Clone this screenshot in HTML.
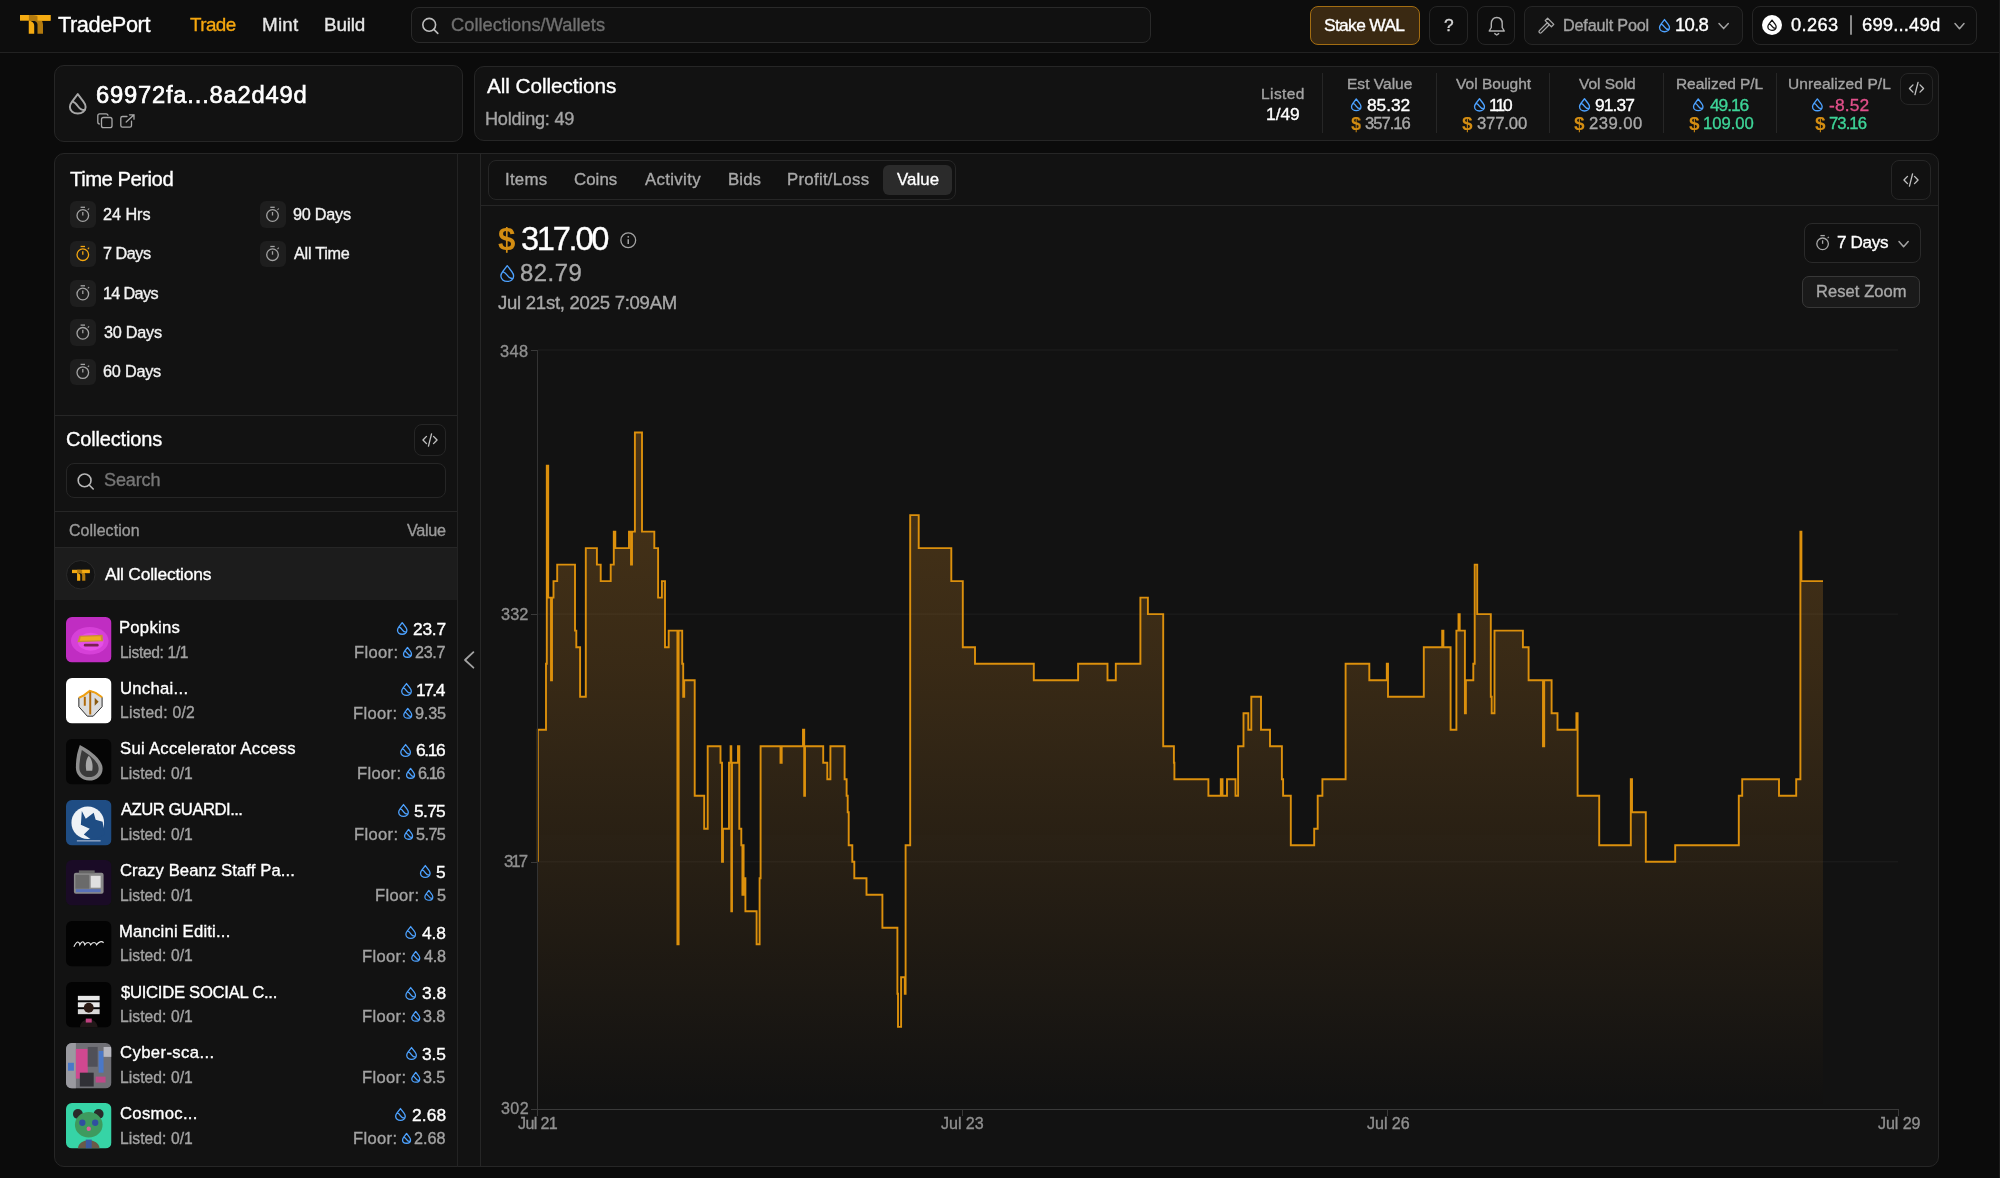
<!DOCTYPE html>
<html><head><meta charset="utf-8">
<style>
*{box-sizing:border-box;margin:0;padding:0}
html,body{width:2000px;height:1178px;overflow:hidden;background:#0b0b0b;font-family:"Liberation Sans",sans-serif;color:#fff}
.a{position:absolute}
.t{position:absolute;white-space:nowrap;line-height:1;will-change:transform;-webkit-text-stroke:0.35px currentColor}
svg{position:absolute;overflow:visible}
</style></head><body>
<div class="a" style="left:0px;top:0px;width:2000px;height:53px;background:#0d0d0d;border-bottom:1px solid #222"></div>
<div class="a" style="left:1999px;top:0px;width:1px;height:1178px;background:#1c1c1c"></div>
<div class="a" style="left:411px;top:7px;width:740px;height:36px;background:#111;border:1px solid #2a2a2a;border-radius:8px"></div>
<div class="a" style="left:1310px;top:6px;width:110px;height:39px;background:#3a2912;border:1px solid #a36d12;border-radius:8px"></div>
<div class="a" style="left:1429px;top:6px;width:39px;height:39px;background:#0e0e0e;border:1px solid #262626;border-radius:8px"></div>
<div class="a" style="left:1477px;top:6px;width:38px;height:39px;background:#0e0e0e;border:1px solid #262626;border-radius:8px"></div>
<div class="a" style="left:1524px;top:6px;width:219px;height:39px;background:#121212;border:1px solid #262626;border-radius:8px"></div>
<div class="a" style="left:1752px;top:6px;width:225px;height:39px;background:#0e0e0e;border:1px solid #262626;border-radius:8px"></div>
<div class="a" style="left:54px;top:65px;width:409px;height:77px;background:#121212;border:1px solid #262626;border-radius:10px"></div>
<div class="a" style="left:474px;top:66px;width:1465px;height:75px;background:#121212;border:1px solid #262626;border-radius:10px"></div>
<div class="a" style="left:1322px;top:73px;width:1px;height:60px;background:#262626"></div>
<div class="a" style="left:1436px;top:73px;width:1px;height:60px;background:#262626"></div>
<div class="a" style="left:1549px;top:73px;width:1px;height:60px;background:#262626"></div>
<div class="a" style="left:1663px;top:73px;width:1px;height:60px;background:#262626"></div>
<div class="a" style="left:1776px;top:73px;width:1px;height:60px;background:#262626"></div>
<div class="a" style="left:1900px;top:73px;width:33px;height:32px;border:1px solid #262626;border-radius:8px;background:#111"></div>
<div class="a" style="left:54px;top:153px;width:1885px;height:1014px;background:#121212;border:1px solid #262626;border-radius:10px"></div>
<div class="a" style="left:457px;top:153px;width:1px;height:1014px;background:#232323"></div>
<div class="a" style="left:480px;top:153px;width:1px;height:1014px;background:#262626"></div>
<div class="a" style="left:55px;top:415px;width:402px;height:1px;background:#262626"></div>
<div class="a" style="left:55px;top:511px;width:402px;height:1px;background:#262626"></div>
<div class="a" style="left:55px;top:547px;width:402px;height:1px;background:#262626"></div>
<div class="a" style="left:55px;top:548px;width:402px;height:52px;background:#1c1c1c"></div>
<div class="a" style="left:481px;top:205px;width:1457px;height:1px;background:#262626"></div>
<div class="a" style="left:488px;top:160px;width:468px;height:40px;border:1px solid #262626;border-radius:8px;background:#111"></div>
<div class="a" style="left:883px;top:165px;width:69px;height:30px;background:#2b2b2b;border-radius:6px"></div>
<div class="a" style="left:1891px;top:160px;width:40px;height:40px;border:1px solid #262626;border-radius:8px;background:#111"></div>
<div class="a" style="left:1804px;top:223px;width:117px;height:40px;border:1px solid #2a2a2a;border-radius:8px;background:#101010"></div>
<div class="a" style="left:1802px;top:276px;width:118px;height:32px;border:1px solid #383838;border-radius:7px;background:#1a1a1a"></div>
<div class="a" style="left:414px;top:424px;width:32px;height:32px;border:1px solid #262626;border-radius:8px;background:#111"></div>
<div class="a" style="left:66px;top:463px;width:380px;height:35px;border:1px solid #262626;border-radius:8px;background:#101010"></div>
<div class="a" style="left:70px;top:201px;width:26px;height:26.5px;background:#1e1e1e;border-radius:6px"></div>
<div class="a" style="left:70px;top:240.5px;width:26px;height:26.5px;background:#1e1e1e;border-radius:6px"></div>
<div class="a" style="left:70px;top:280px;width:26px;height:26.5px;background:#1e1e1e;border-radius:6px"></div>
<div class="a" style="left:70px;top:319px;width:26px;height:26.5px;background:#1e1e1e;border-radius:6px"></div>
<div class="a" style="left:70px;top:358.5px;width:26px;height:26.5px;background:#1e1e1e;border-radius:6px"></div>
<div class="a" style="left:259.5px;top:201px;width:26px;height:26.5px;background:#1e1e1e;border-radius:6px"></div>
<div class="a" style="left:259.5px;top:240.5px;width:26px;height:26.5px;background:#1e1e1e;border-radius:6px"></div>
<svg style="left:20px;top:15.2px;" width="31" height="19" viewBox="0 0 31 19"><rect x="0" y="0" width="30.5" height="5.7" fill="#f5ab12"/><path d="M8.9 0H12.5C18 0 23 4.2 23 9.8V18.8H17.5V9.8C17.5 7.2 15.5 5.7 12.5 5.7H8.9Z" fill="#b37a0e"/><rect x="17.5" y="0" width="13" height="5.7" fill="#f5ab12"/><path d="M8.75 5.7H9.2C12 5.7 14.2 8 14.2 10.8V18.8H8.75Z" fill="#f5ab12"/></svg>
<div class="t" style="left:58.32px;top:14.00px;font-size:21.74px;color:#fff;letter-spacing:-0.42px;">TradePort</div>
<div class="t" style="left:189.82px;top:16.00px;font-size:18.84px;color:#f5a70f;letter-spacing:-0.57px;">Trade</div>
<div class="t" style="left:262.19px;top:16.00px;font-size:18.84px;color:#e6e6e6;letter-spacing:0.20px;">Mint</div>
<div class="t" style="left:324.49px;top:16.00px;font-size:18.84px;color:#e6e6e6;letter-spacing:-0.17px;">Build</div>
<svg style="left:0;top:0" width="1" height="1"><circle cx="429.2" cy="24.799999999999997" r="6.4" fill="none" stroke="#bdbdbd" stroke-width="1.6"/><line x1="433.808" y1="29.407999999999998" x2="437.8" y2="33.4" stroke="#bdbdbd" stroke-width="1.6" stroke-linecap="round"/></svg>
<div class="t" style="left:451.09px;top:16.00px;font-size:18.26px;color:#707070;letter-spacing:0.03px;">Collections/Wallets</div>
<div class="t" style="left:1324.42px;top:17.00px;font-size:17.39px;color:#fff;letter-spacing:-0.66px;">Stake WAL</div>
<div class="t" style="left:1443.70px;top:17.00px;font-size:17.39px;color:#d6d6d6;">?</div>
<svg style="left:1487.5px;top:16px;" width="17.5" height="20" viewBox="0 0 17.5 20"><path d="M8.75 1.5 C5.3 1.5 3.3 4 3.3 7.5 V11.5 L1.2 15 H16.3 L14.2 11.5 V7.5 C14.2 4 12.2 1.5 8.75 1.5Z" fill="none" stroke="#b0b0b0" stroke-width="1.4" stroke-linejoin="round"/><path d="M6.8 17.6 L8.75 19 L10.7 17.6" fill="none" stroke="#b0b0b0" stroke-width="1.4" stroke-linecap="round"/></svg>
<svg style="left:1537.5px;top:16.5px;" width="17" height="17" viewBox="0 0 17 17"><path d="M9.6 1.2 L15.8 7.4 L13.4 9.8 L7.2 3.6 Z" fill="none" stroke="#a8a8a8" stroke-width="1.3" stroke-linejoin="round"/><path d="M9.3 5.7 L11.3 7.7 L3.4 15.6 C2.85 16.15 1.95 16.15 1.4 15.6 C0.85 15.05 0.85 14.15 1.4 13.6 Z" fill="none" stroke="#a8a8a8" stroke-width="1.3" stroke-linejoin="round"/></svg>
<div class="t" style="left:1563.10px;top:17.00px;font-size:16.23px;color:#a3a3a3;letter-spacing:-0.20px;">Default Pool</div>
<svg style="left:1659.0px;top:18.6px;overflow:visible" width="11.0" height="13.2" viewBox="0 0 20 24"><path d="M10 1 L16.3 9.2 C17.9 11.3 19 13.4 19 15.6 C19 20.1 15 23.2 10 23.2 C5 23.2 1 20.1 1 15.6 C1 13.4 2.1 11.3 3.7 9.2 Z" fill="none" stroke="#4da2ff" stroke-width="2.45" stroke-linejoin="round"/><path d="M3.6 9.3 C6.8 10.1 8.6 12.4 10.2 14.8 C12 17.6 14.6 19.4 18.6 19.1" fill="none" stroke="#4da2ff" stroke-width="2.45"/></svg>
<div class="t" style="left:1674.61px;top:16.00px;font-size:18.55px;color:#fff;letter-spacing:-0.72px;">10.8</div>
<svg style="left:0;top:0" width="1" height="1"><path d="M1719 23.6 L1723.65 28.6 L1728.3 23.6" fill="none" stroke="#a3a3a3" stroke-width="1.5" stroke-linecap="round" stroke-linejoin="round"/></svg>
<svg style="left:1762px;top:15.4px;" width="20" height="20" viewBox="0 0 20 20"><circle cx="10" cy="10" r="10" fill="#fff"/><g transform="translate(5.4,4.6) scale(0.46)"><path d="M10 1 L16.3 9.2 C17.9 11.3 19 13.4 19 15.6 C19 20.1 15 23.2 10 23.2 C5 23.2 1 20.1 1 15.6 C1 13.4 2.1 11.3 3.7 9.2 Z" fill="none" stroke="#111" stroke-width="2.8" stroke-linejoin="round"/><path d="M3.6 9.3 C6.8 10.1 8.6 12.4 10.2 14.8 C12 17.6 14.6 19.4 18.6 19.1" fill="none" stroke="#111" stroke-width="2.8"/></g></svg>
<div class="t" style="left:1791.07px;top:16.00px;font-size:18.26px;color:#fff;letter-spacing:0.35px;">0.263</div>
<div class="a" style="left:1849.5px;top:14.5px;width:2px;height:20.5px;background:#8a8a8a;border-radius:1px"></div>
<div class="t" style="left:1861.67px;top:16.00px;font-size:18.55px;color:#fff;letter-spacing:0.12px;">699...49d</div>
<svg style="left:0;top:0" width="1" height="1"><path d="M1955 23.6 L1959.5 28.8 L1964 23.6" fill="none" stroke="#a3a3a3" stroke-width="1.5" stroke-linecap="round" stroke-linejoin="round"/></svg>
<svg style="left:68.5px;top:93px;" width="17.5" height="21.5" viewBox="0 0 20 24"><path d="M10 1 L16.3 9.2 C17.9 11.3 19 13.4 19 15.6 C19 20.1 15 23.2 10 23.2 C5 23.2 1 20.1 1 15.6 C1 13.4 2.1 11.3 3.7 9.2 Z" fill="none" stroke="#a8a8a8" stroke-width="2.2" stroke-linejoin="round"/><path d="M3.6 9.3 C6.8 10.1 8.6 12.4 10.2 14.8 C12 17.6 14.6 19.4 18.6 19.1" fill="none" stroke="#a8a8a8" stroke-width="2.2"/></svg>
<div class="t" style="left:96.21px;top:83.00px;font-size:23.77px;color:#fff;letter-spacing:0.78px;-webkit-text-stroke:0.65px #fff;">69972fa...8a2d49d</div>
<svg style="left:96.5px;top:113px;" width="16" height="15.5" viewBox="0 0 16 15.5"><rect x="4.5" y="4.5" width="10.5" height="10.2" rx="2" fill="none" stroke="#a8a8a8" stroke-width="1.3"/><path d="M2.8 11 C1.6 11 0.8 10.2 0.8 9 V2.8 C0.8 1.6 1.6 0.8 2.8 0.8 H9 C10.2 0.8 11 1.6 11 2.8" fill="none" stroke="#a8a8a8" stroke-width="1.3"/></svg>
<svg style="left:120px;top:113.5px;" width="15" height="14" viewBox="0 0 15 14"><path d="M7 2.5 H2.5 C1.5 2.5 0.8 3.2 0.8 4.2 V11.5 C0.8 12.5 1.5 13.2 2.5 13.2 H9.8 C10.8 13.2 11.5 12.5 11.5 11.5 V7.2 M6.2 8 L14 0.8 M9.5 0.8 H14 V5.2" fill="none" stroke="#a8a8a8" stroke-width="1.3" stroke-linecap="round" stroke-linejoin="round"/></svg>
<div class="t" style="left:486.50px;top:76.00px;font-size:20.72px;color:#fff;letter-spacing:-0.05px;">All Collections</div>
<div class="t" style="left:485.35px;top:110.00px;font-size:18.12px;color:#a3a3a3;letter-spacing:-0.22px;">Holding: 49</div>
<div class="t" style="left:1260.56px;top:86.00px;font-size:15.51px;color:#a3a3a3;letter-spacing:0.42px;">Listed</div>
<div class="t" style="left:1265.50px;top:106.00px;font-size:17.39px;color:#fff;letter-spacing:-0.01px;">1/49</div>
<div class="t" style="left:1346.56px;top:76.00px;font-size:15.51px;color:#a3a3a3;letter-spacing:0.02px;">Est Value</div>
<svg style="left:1350.5px;top:98.2px;overflow:visible" width="10.5" height="13.6" viewBox="0 0 20 24"><path d="M10 1 L16.3 9.2 C17.9 11.3 19 13.4 19 15.6 C19 20.1 15 23.2 10 23.2 C5 23.2 1 20.1 1 15.6 C1 13.4 2.1 11.3 3.7 9.2 Z" fill="none" stroke="#4da2ff" stroke-width="2.57" stroke-linejoin="round"/><path d="M3.6 9.3 C6.8 10.1 8.6 12.4 10.2 14.8 C12 17.6 14.6 19.4 18.6 19.1" fill="none" stroke="#4da2ff" stroke-width="2.57"/></svg>
<div class="t" style="left:1366.72px;top:97.00px;font-size:17.39px;color:#fff;letter-spacing:-0.08px;">85.32</div>
<div class="t" style="left:1350.73px;top:114.41px;font-size:19.02px;color:#d38d12;transform-origin:0 0;transform:scaleX(0.951);font-weight:bold;-webkit-text-stroke:0">$</div>
<div class="t" style="left:1365.33px;top:116.00px;font-size:16.67px;color:#a8a8a8;letter-spacing:-1.03px;">357.16</div>
<div class="t" style="left:1455.52px;top:76.00px;font-size:15.51px;color:#a3a3a3;letter-spacing:0.02px;">Vol Bought</div>
<svg style="left:1474.0px;top:98.2px;overflow:visible" width="11.0" height="13.6" viewBox="0 0 20 24"><path d="M10 1 L16.3 9.2 C17.9 11.3 19 13.4 19 15.6 C19 20.1 15 23.2 10 23.2 C5 23.2 1 20.1 1 15.6 C1 13.4 2.1 11.3 3.7 9.2 Z" fill="none" stroke="#4da2ff" stroke-width="2.45" stroke-linejoin="round"/><path d="M3.6 9.3 C6.8 10.1 8.6 12.4 10.2 14.8 C12 17.6 14.6 19.4 18.6 19.1" fill="none" stroke="#4da2ff" stroke-width="2.45"/></svg>
<div class="t" style="left:1489.30px;top:97.00px;font-size:17.39px;color:#fff;letter-spacing:-1.96px;">110</div>
<div class="t" style="left:1461.71px;top:114.41px;font-size:19.02px;color:#d38d12;transform-origin:0 0;transform:scaleX(1.002);font-weight:bold;-webkit-text-stroke:0">$</div>
<div class="t" style="left:1476.53px;top:116.00px;font-size:16.67px;color:#a8a8a8;letter-spacing:-0.15px;">377.00</div>
<div class="t" style="left:1578.62px;top:76.00px;font-size:15.51px;color:#a3a3a3;letter-spacing:-0.02px;">Vol Sold</div>
<svg style="left:1578.7px;top:98.2px;overflow:visible" width="11.0" height="13.6" viewBox="0 0 20 24"><path d="M10 1 L16.3 9.2 C17.9 11.3 19 13.4 19 15.6 C19 20.1 15 23.2 10 23.2 C5 23.2 1 20.1 1 15.6 C1 13.4 2.1 11.3 3.7 9.2 Z" fill="none" stroke="#4da2ff" stroke-width="2.45" stroke-linejoin="round"/><path d="M3.6 9.3 C6.8 10.1 8.6 12.4 10.2 14.8 C12 17.6 14.6 19.4 18.6 19.1" fill="none" stroke="#4da2ff" stroke-width="2.45"/></svg>
<div class="t" style="left:1595.42px;top:97.00px;font-size:17.39px;color:#fff;letter-spacing:-0.91px;">91.37</div>
<div class="t" style="left:1574.11px;top:114.41px;font-size:19.02px;color:#d38d12;transform-origin:0 0;transform:scaleX(1.002);font-weight:bold;-webkit-text-stroke:0">$</div>
<div class="t" style="left:1588.57px;top:116.00px;font-size:16.67px;color:#a8a8a8;letter-spacing:0.44px;">239.00</div>
<div class="t" style="left:1676.26px;top:76.00px;font-size:15.51px;color:#a3a3a3;letter-spacing:-0.07px;">Realized P/L</div>
<svg style="left:1692.9px;top:98.2px;overflow:visible" width="10.5" height="13.6" viewBox="0 0 20 24"><path d="M10 1 L16.3 9.2 C17.9 11.3 19 13.4 19 15.6 C19 20.1 15 23.2 10 23.2 C5 23.2 1 20.1 1 15.6 C1 13.4 2.1 11.3 3.7 9.2 Z" fill="none" stroke="#4da2ff" stroke-width="2.57" stroke-linejoin="round"/><path d="M3.6 9.3 C6.8 10.1 8.6 12.4 10.2 14.8 C12 17.6 14.6 19.4 18.6 19.1" fill="none" stroke="#4da2ff" stroke-width="2.57"/></svg>
<div class="t" style="left:1709.75px;top:97.00px;font-size:17.39px;color:#3ed598;letter-spacing:-1.08px;">49.16</div>
<div class="t" style="left:1689.12px;top:114.41px;font-size:19.02px;color:#d38d12;transform-origin:0 0;transform:scaleX(0.982);font-weight:bold;-webkit-text-stroke:0">$</div>
<div class="t" style="left:1702.85px;top:116.00px;font-size:16.67px;color:#3ed598;letter-spacing:-0.03px;">109.00</div>
<div class="t" style="left:1787.94px;top:76.00px;font-size:15.51px;color:#a3a3a3;letter-spacing:0.09px;">Unrealized P/L</div>
<svg style="left:1812.0px;top:98.2px;overflow:visible" width="10.7" height="13.6" viewBox="0 0 20 24"><path d="M10 1 L16.3 9.2 C17.9 11.3 19 13.4 19 15.6 C19 20.1 15 23.2 10 23.2 C5 23.2 1 20.1 1 15.6 C1 13.4 2.1 11.3 3.7 9.2 Z" fill="none" stroke="#4da2ff" stroke-width="2.52" stroke-linejoin="round"/><path d="M3.6 9.3 C6.8 10.1 8.6 12.4 10.2 14.8 C12 17.6 14.6 19.4 18.6 19.1" fill="none" stroke="#4da2ff" stroke-width="2.52"/></svg>
<div class="t" style="left:1828.62px;top:97.00px;font-size:17.39px;color:#e0508a;letter-spacing:0.15px;">-8.52</div>
<div class="t" style="left:1814.92px;top:114.41px;font-size:19.02px;color:#d38d12;transform-origin:0 0;transform:scaleX(0.982);font-weight:bold;-webkit-text-stroke:0">$</div>
<div class="t" style="left:1829.27px;top:116.00px;font-size:16.67px;color:#3ed598;letter-spacing:-0.94px;">73.16</div>
<svg style="left:0;top:0" width="1" height="1"><path d="M1912.98 84.87 L1909.46 88.5 L1912.98 92.13 M1920.02 84.87 L1923.54 88.5 L1920.02 92.13 M1918.04 82.45 L1914.96 94.55" fill="none" stroke="#c0c0c0" stroke-width="1.35" stroke-linecap="round" stroke-linejoin="round"/></svg>
<div class="t" style="left:69.59px;top:169.00px;font-size:20.29px;color:#fff;letter-spacing:-0.49px;">Time Period</div>
<div class="t" style="left:103.49px;top:206.00px;font-size:16.23px;color:#f2f2f2;letter-spacing:-0.04px;">24 Hrs</div>
<div class="t" style="left:103.49px;top:245.00px;font-size:16.23px;color:#f2f2f2;letter-spacing:-0.48px;">7 Days</div>
<div class="t" style="left:103.08px;top:285.00px;font-size:16.23px;color:#f2f2f2;letter-spacing:-0.66px;">14 Days</div>
<div class="t" style="left:103.65px;top:324.00px;font-size:16.23px;color:#f2f2f2;letter-spacing:-0.24px;">30 Days</div>
<div class="t" style="left:103.49px;top:363.00px;font-size:16.23px;color:#f2f2f2;letter-spacing:-0.22px;">60 Days</div>
<div class="t" style="left:293.17px;top:206.00px;font-size:16.23px;color:#f2f2f2;letter-spacing:-0.25px;">90 Days</div>
<div class="t" style="left:293.90px;top:245.00px;font-size:16.23px;color:#f2f2f2;letter-spacing:-0.27px;">All Time</div>
<svg style="left:0;top:0" width="1" height="1"><circle cx="82.8" cy="215.5" r="5.8" fill="none" stroke="#a3a3a3" stroke-width="1.3"/><line x1="80.6" y1="207.3" x2="85.0" y2="207.3" stroke="#a3a3a3" stroke-width="1.3"/><line x1="82.8" y1="212.0" x2="82.8" y2="215.5" stroke="#a3a3a3" stroke-width="1.3"/><line x1="87.8" y1="209.9" x2="89.1" y2="208.5" stroke="#a3a3a3" stroke-width="1.04"/></svg>
<svg style="left:0;top:0" width="1" height="1"><circle cx="82.8" cy="254.7" r="5.8" fill="none" stroke="#f5a70f" stroke-width="1.3"/><line x1="80.6" y1="246.5" x2="85.0" y2="246.5" stroke="#f5a70f" stroke-width="1.3"/><line x1="82.8" y1="251.2" x2="82.8" y2="254.7" stroke="#f5a70f" stroke-width="1.3"/><line x1="87.8" y1="249.1" x2="89.1" y2="247.7" stroke="#f5a70f" stroke-width="1.04"/></svg>
<svg style="left:0;top:0" width="1" height="1"><circle cx="82.8" cy="294" r="5.8" fill="none" stroke="#a3a3a3" stroke-width="1.3"/><line x1="80.6" y1="285.8" x2="85.0" y2="285.8" stroke="#a3a3a3" stroke-width="1.3"/><line x1="82.8" y1="290.5" x2="82.8" y2="294" stroke="#a3a3a3" stroke-width="1.3"/><line x1="87.8" y1="288.4" x2="89.1" y2="287" stroke="#a3a3a3" stroke-width="1.04"/></svg>
<svg style="left:0;top:0" width="1" height="1"><circle cx="82.8" cy="333.3" r="5.8" fill="none" stroke="#a3a3a3" stroke-width="1.3"/><line x1="80.6" y1="325.1" x2="85.0" y2="325.1" stroke="#a3a3a3" stroke-width="1.3"/><line x1="82.8" y1="329.8" x2="82.8" y2="333.3" stroke="#a3a3a3" stroke-width="1.3"/><line x1="87.8" y1="327.7" x2="89.1" y2="326.3" stroke="#a3a3a3" stroke-width="1.04"/></svg>
<svg style="left:0;top:0" width="1" height="1"><circle cx="82.8" cy="372.6" r="5.8" fill="none" stroke="#a3a3a3" stroke-width="1.3"/><line x1="80.6" y1="364.40000000000003" x2="85.0" y2="364.40000000000003" stroke="#a3a3a3" stroke-width="1.3"/><line x1="82.8" y1="369.1" x2="82.8" y2="372.6" stroke="#a3a3a3" stroke-width="1.3"/><line x1="87.8" y1="367.0" x2="89.1" y2="365.6" stroke="#a3a3a3" stroke-width="1.04"/></svg>
<svg style="left:0;top:0" width="1" height="1"><circle cx="272.5" cy="215.5" r="5.8" fill="none" stroke="#a3a3a3" stroke-width="1.3"/><line x1="270.3" y1="207.3" x2="274.7" y2="207.3" stroke="#a3a3a3" stroke-width="1.3"/><line x1="272.5" y1="212.0" x2="272.5" y2="215.5" stroke="#a3a3a3" stroke-width="1.3"/><line x1="277.5" y1="209.9" x2="278.8" y2="208.5" stroke="#a3a3a3" stroke-width="1.04"/></svg>
<svg style="left:0;top:0" width="1" height="1"><circle cx="272.5" cy="254.7" r="5.8" fill="none" stroke="#a3a3a3" stroke-width="1.3"/><line x1="270.3" y1="246.5" x2="274.7" y2="246.5" stroke="#a3a3a3" stroke-width="1.3"/><line x1="272.5" y1="251.2" x2="272.5" y2="254.7" stroke="#a3a3a3" stroke-width="1.3"/><line x1="277.5" y1="249.1" x2="278.8" y2="247.7" stroke="#a3a3a3" stroke-width="1.04"/></svg>
<div class="t" style="left:65.50px;top:429.00px;font-size:20.00px;color:#fff;letter-spacing:-0.16px;">Collections</div>
<svg style="left:0;top:0" width="1" height="1"><path d="M426.48 436.37 L422.96 440 L426.48 443.63 M433.52 436.37 L437.04 440 L433.52 443.63 M431.54 433.95 L428.46 446.05" fill="none" stroke="#c0c0c0" stroke-width="1.35" stroke-linecap="round" stroke-linejoin="round"/></svg>
<svg style="left:0;top:0" width="1" height="1"><circle cx="84.60000000000001" cy="480.4" r="6.4" fill="none" stroke="#b8b8b8" stroke-width="1.6"/><line x1="89.20800000000001" y1="485.008" x2="93.2" y2="489" stroke="#b8b8b8" stroke-width="1.6" stroke-linecap="round"/></svg>
<div class="t" style="left:103.68px;top:471.00px;font-size:18.12px;color:#767676;letter-spacing:-0.17px;">Search</div>
<div class="t" style="left:69.00px;top:523.00px;font-size:15.94px;color:#9a9a9a;letter-spacing:0.06px;">Collection</div>
<div class="t" style="left:407.12px;top:522.00px;font-size:16.23px;color:#9a9a9a;letter-spacing:-0.34px;">Value</div>
<svg style="left:66px;top:560px;" width="29.5" height="29.5" viewBox="0 0 29.5 29.5"><circle cx="14.75" cy="14.75" r="14.25" fill="#131313" stroke="#2a2a2a" stroke-width="1"/><g transform="translate(6,9.8) scale(0.58)"><rect x="0" y="0" width="30.5" height="5.7" fill="#f5ab12"/><path d="M8.9 0H12.5C18 0 23 4.2 23 9.8V18.8H17.5V9.8C17.5 7.2 15.5 5.7 12.5 5.7H8.9Z" fill="#b37a0e"/><rect x="17.5" y="0" width="13" height="5.7" fill="#f5ab12"/><path d="M8.75 5.7H9.2C12 5.7 14.2 8 14.2 10.8V18.8H8.75Z" fill="#f5ab12"/></g></svg>
<div class="t" style="left:105.00px;top:566.00px;font-size:17.39px;color:#fff;letter-spacing:-0.20px;">All Collections</div>
<svg style="left:66px;top:617.2px" width="45.5" height="45.5" viewBox="0 0 46 46"><defs><clipPath id="th0"><rect width="46" height="46" rx="6"/></clipPath></defs><g clip-path="url(#th0)"><rect width="46" height="46" fill="#c02dc2"/><ellipse cx="24" cy="24" rx="19" ry="14" fill="#d640d8"/><ellipse cx="25" cy="25" rx="13" ry="9" fill="#e650e8"/><path d="M11.5 25.5 L13.5 19 L37 18 L37.5 24.5 Z" fill="#c88a3a"/><path d="M14 24 L15 20 L35 19.5 L35.5 23.5 Z" fill="#eeac20"/><rect x="18" y="27" width="15" height="2.8" rx="1.2" fill="#7a2050"/></g></svg>
<div class="t" style="left:119.47px;top:620.00px;font-size:16.67px;color:#fff;letter-spacing:0.25px;">Popkins</div>
<div class="t" style="left:119.75px;top:645.00px;font-size:15.65px;color:#a3a3a3;letter-spacing:-0.36px;">Listed: 1/1</div>
<svg style="left:396.8px;top:622.0px;overflow:visible" width="10.4" height="12.8" viewBox="0 0 20 24"><path d="M10 1 L16.3 9.2 C17.9 11.3 19 13.4 19 15.6 C19 20.1 15 23.2 10 23.2 C5 23.2 1 20.1 1 15.6 C1 13.4 2.1 11.3 3.7 9.2 Z" fill="none" stroke="#4da2ff" stroke-width="2.60" stroke-linejoin="round"/><path d="M3.6 9.3 C6.8 10.1 8.6 12.4 10.2 14.8 C12 17.6 14.6 19.4 18.6 19.1" fill="none" stroke="#4da2ff" stroke-width="2.60"/></svg>
<div class="t" style="left:412.73px;top:621.00px;font-size:17.39px;color:#fff;letter-spacing:-0.23px;">23.7</div>
<div class="t" style="left:353.88px;top:645.00px;font-size:16.52px;color:#a3a3a3;letter-spacing:0.36px;">Floor:</div>
<svg style="left:403.0px;top:646.8px;overflow:visible" width="9.0" height="10.6" viewBox="0 0 20 24"><path d="M10 1 L16.3 9.2 C17.9 11.3 19 13.4 19 15.6 C19 20.1 15 23.2 10 23.2 C5 23.2 1 20.1 1 15.6 C1 13.4 2.1 11.3 3.7 9.2 Z" fill="none" stroke="#4da2ff" stroke-width="3.00" stroke-linejoin="round"/><path d="M3.6 9.3 C6.8 10.1 8.6 12.4 10.2 14.8 C12 17.6 14.6 19.4 18.6 19.1" fill="none" stroke="#4da2ff" stroke-width="3.00"/></svg>
<div class="t" style="left:415.39px;top:644.00px;font-size:16.23px;color:#a3a3a3;letter-spacing:-0.38px;">23.7</div>
<svg style="left:66px;top:678.0px" width="45.5" height="45.5" viewBox="0 0 46 46"><defs><clipPath id="th1"><rect width="46" height="46" rx="6"/></clipPath></defs><g clip-path="url(#th1)"><rect width="46" height="46" fill="#fff"/><path d="M13 20 L18 17.5 L24 13 L30 15 L36.5 19.5 L36.5 29 L27.5 38.6 L21.5 38.6 L13 29 Z" fill="#dcdcdc" stroke="#2a2a2a" stroke-width="1"/><path d="M13 20 L18 17.5 L24 13 L30 15 L36.5 19.5" fill="none" stroke="#f0a010" stroke-width="2"/><path d="M24.5 14 V37 M19 19 V28" stroke="#b06a0a" stroke-width="2"/><path d="M29 20 L33 24 L29 28Z" fill="#8a5a10"/></g></svg>
<div class="t" style="left:119.55px;top:681.00px;font-size:16.67px;color:#fff;letter-spacing:0.29px;">Unchai...</div>
<div class="t" style="left:119.75px;top:705.00px;font-size:15.65px;color:#a3a3a3;letter-spacing:0.26px;">Listed: 0/2</div>
<svg style="left:401.0px;top:682.8px;overflow:visible" width="11.0" height="12.8" viewBox="0 0 20 24"><path d="M10 1 L16.3 9.2 C17.9 11.3 19 13.4 19 15.6 C19 20.1 15 23.2 10 23.2 C5 23.2 1 20.1 1 15.6 C1 13.4 2.1 11.3 3.7 9.2 Z" fill="none" stroke="#4da2ff" stroke-width="2.45" stroke-linejoin="round"/><path d="M3.6 9.3 C6.8 10.1 8.6 12.4 10.2 14.8 C12 17.6 14.6 19.4 18.6 19.1" fill="none" stroke="#4da2ff" stroke-width="2.45"/></svg>
<div class="t" style="left:416.20px;top:682.00px;font-size:17.39px;color:#fff;letter-spacing:-1.50px;">17.4</div>
<div class="t" style="left:353.28px;top:706.00px;font-size:16.52px;color:#a3a3a3;letter-spacing:0.36px;">Floor:</div>
<svg style="left:402.5px;top:707.5px;overflow:visible" width="9.5" height="10.6" viewBox="0 0 20 24"><path d="M10 1 L16.3 9.2 C17.9 11.3 19 13.4 19 15.6 C19 20.1 15 23.2 10 23.2 C5 23.2 1 20.1 1 15.6 C1 13.4 2.1 11.3 3.7 9.2 Z" fill="none" stroke="#4da2ff" stroke-width="2.84" stroke-linejoin="round"/><path d="M3.6 9.3 C6.8 10.1 8.6 12.4 10.2 14.8 C12 17.6 14.6 19.4 18.6 19.1" fill="none" stroke="#4da2ff" stroke-width="2.84"/></svg>
<div class="t" style="left:414.57px;top:705.00px;font-size:16.23px;color:#a3a3a3;letter-spacing:-0.16px;">9.35</div>
<svg style="left:66px;top:738.7px" width="45.5" height="45.5" viewBox="0 0 46 46"><defs><clipPath id="th2"><rect width="46" height="46" rx="6"/></clipPath></defs><g clip-path="url(#th2)"><rect width="46" height="46" fill="#050505"/><path d="M14 6 C22 10 37 20 37 30 C37 37 31 42 23.5 42 C15.5 42 10 36 10 29 C10 21 11 14 14 6Z" fill="#8e8e8e"/><path d="M16 11 C22 15 33 22 33 30 C33 35 29 38.5 23.5 38.5 C17.5 38.5 13.5 34.5 13.5 29 C13.5 23 14.5 17 16 11Z" fill="#3a3a3a"/><path d="M23 17 C26.5 21 27.5 26 26.5 32 L20.5 32 C19.5 26 20 21 23 17Z" fill="#a8a8a8"/></g></svg>
<div class="t" style="left:120.05px;top:741.00px;font-size:16.67px;color:#fff;letter-spacing:0.29px;">Sui Accelerator Access</div>
<div class="t" style="left:119.75px;top:766.00px;font-size:15.65px;color:#a3a3a3;letter-spacing:0.06px;">Listed: 0/1</div>
<svg style="left:400.3px;top:743.5px;overflow:visible" width="11.2" height="12.8" viewBox="0 0 20 24"><path d="M10 1 L16.3 9.2 C17.9 11.3 19 13.4 19 15.6 C19 20.1 15 23.2 10 23.2 C5 23.2 1 20.1 1 15.6 C1 13.4 2.1 11.3 3.7 9.2 Z" fill="none" stroke="#4da2ff" stroke-width="2.41" stroke-linejoin="round"/><path d="M3.6 9.3 C6.8 10.1 8.6 12.4 10.2 14.8 C12 17.6 14.6 19.4 18.6 19.1" fill="none" stroke="#4da2ff" stroke-width="2.41"/></svg>
<div class="t" style="left:416.13px;top:742.00px;font-size:17.39px;color:#fff;letter-spacing:-1.42px;">6.16</div>
<div class="t" style="left:356.98px;top:766.00px;font-size:16.52px;color:#a3a3a3;letter-spacing:0.36px;">Floor:</div>
<svg style="left:406.4px;top:768.3px;overflow:visible" width="9.1" height="10.6" viewBox="0 0 20 24"><path d="M10 1 L16.3 9.2 C17.9 11.3 19 13.4 19 15.6 C19 20.1 15 23.2 10 23.2 C5 23.2 1 20.1 1 15.6 C1 13.4 2.1 11.3 3.7 9.2 Z" fill="none" stroke="#4da2ff" stroke-width="2.97" stroke-linejoin="round"/><path d="M3.6 9.3 C6.8 10.1 8.6 12.4 10.2 14.8 C12 17.6 14.6 19.4 18.6 19.1" fill="none" stroke="#4da2ff" stroke-width="2.97"/></svg>
<div class="t" style="left:418.39px;top:765.00px;font-size:16.23px;color:#a3a3a3;letter-spacing:-1.44px;">6.16</div>
<svg style="left:66px;top:799.5px" width="45.5" height="45.5" viewBox="0 0 46 46"><defs><clipPath id="th3"><rect width="46" height="46" rx="6"/></clipPath></defs><g clip-path="url(#th3)"><rect width="46" height="46" fill="#1f4d84"/><circle cx="22" cy="23" r="16.5" fill="#eef2f6"/><path d="M16 11 L20 19 L28 13 L30 20 L37 22 L39 35 L27 41 L18 35 L24 29 L15 25 Z" fill="#1f4d84"/><rect x="11" y="40.5" width="24" height="1.5" fill="#8aa0c0"/></g></svg>
<div class="t" style="left:120.80px;top:802.00px;font-size:16.67px;color:#fff;letter-spacing:-0.51px;">AZUR GUARDI...</div>
<div class="t" style="left:119.75px;top:827.00px;font-size:15.65px;color:#a3a3a3;letter-spacing:0.06px;">Listed: 0/1</div>
<svg style="left:397.6px;top:804.2px;overflow:visible" width="11.0" height="12.8" viewBox="0 0 20 24"><path d="M10 1 L16.3 9.2 C17.9 11.3 19 13.4 19 15.6 C19 20.1 15 23.2 10 23.2 C5 23.2 1 20.1 1 15.6 C1 13.4 2.1 11.3 3.7 9.2 Z" fill="none" stroke="#4da2ff" stroke-width="2.45" stroke-linejoin="round"/><path d="M3.6 9.3 C6.8 10.1 8.6 12.4 10.2 14.8 C12 17.6 14.6 19.4 18.6 19.1" fill="none" stroke="#4da2ff" stroke-width="2.45"/></svg>
<div class="t" style="left:413.90px;top:803.00px;font-size:17.39px;color:#fff;letter-spacing:-0.68px;">5.75</div>
<div class="t" style="left:354.38px;top:827.00px;font-size:16.52px;color:#a3a3a3;letter-spacing:0.36px;">Floor:</div>
<svg style="left:403.8px;top:829.0px;overflow:visible" width="9.2" height="10.6" viewBox="0 0 20 24"><path d="M10 1 L16.3 9.2 C17.9 11.3 19 13.4 19 15.6 C19 20.1 15 23.2 10 23.2 C5 23.2 1 20.1 1 15.6 C1 13.4 2.1 11.3 3.7 9.2 Z" fill="none" stroke="#4da2ff" stroke-width="2.93" stroke-linejoin="round"/><path d="M3.6 9.3 C6.8 10.1 8.6 12.4 10.2 14.8 C12 17.6 14.6 19.4 18.6 19.1" fill="none" stroke="#4da2ff" stroke-width="2.93"/></svg>
<div class="t" style="left:415.75px;top:826.00px;font-size:16.23px;color:#a3a3a3;letter-spacing:-0.56px;">5.75</div>
<svg style="left:66px;top:860.2px" width="45.5" height="45.5" viewBox="0 0 46 46"><defs><clipPath id="th4"><rect width="46" height="46" rx="6"/></clipPath></defs><g clip-path="url(#th4)"><rect width="46" height="46" fill="#1a0b26"/><rect x="8" y="13" width="30" height="21" rx="2" fill="#8a8a8a"/><rect x="9.5" y="15" width="14" height="14" fill="#6a6a6a"/><rect x="25" y="16" width="10" height="12" fill="#e0e0e0"/><rect x="10" y="29.5" width="25" height="3" fill="#5a72b8"/><rect x="13" y="10.5" width="16" height="3" fill="#666"/></g></svg>
<div class="t" style="left:119.97px;top:863.00px;font-size:16.67px;color:#fff;letter-spacing:0.09px;">Crazy Beanz Staff Pa...</div>
<div class="t" style="left:119.75px;top:888.00px;font-size:15.65px;color:#a3a3a3;letter-spacing:0.06px;">Listed: 0/1</div>
<svg style="left:419.7px;top:865.0px;overflow:visible" width="10.6" height="12.8" viewBox="0 0 20 24"><path d="M10 1 L16.3 9.2 C17.9 11.3 19 13.4 19 15.6 C19 20.1 15 23.2 10 23.2 C5 23.2 1 20.1 1 15.6 C1 13.4 2.1 11.3 3.7 9.2 Z" fill="none" stroke="#4da2ff" stroke-width="2.55" stroke-linejoin="round"/><path d="M3.6 9.3 C6.8 10.1 8.6 12.4 10.2 14.8 C12 17.6 14.6 19.4 18.6 19.1" fill="none" stroke="#4da2ff" stroke-width="2.55"/></svg>
<div class="t" style="left:436.00px;top:864.00px;font-size:17.39px;color:#fff;">5</div>
<div class="t" style="left:375.28px;top:888.00px;font-size:16.52px;color:#a3a3a3;letter-spacing:0.36px;">Floor:</div>
<svg style="left:424.0px;top:889.8px;overflow:visible" width="9.7" height="10.6" viewBox="0 0 20 24"><path d="M10 1 L16.3 9.2 C17.9 11.3 19 13.4 19 15.6 C19 20.1 15 23.2 10 23.2 C5 23.2 1 20.1 1 15.6 C1 13.4 2.1 11.3 3.7 9.2 Z" fill="none" stroke="#4da2ff" stroke-width="2.78" stroke-linejoin="round"/><path d="M3.6 9.3 C6.8 10.1 8.6 12.4 10.2 14.8 C12 17.6 14.6 19.4 18.6 19.1" fill="none" stroke="#4da2ff" stroke-width="2.78"/></svg>
<div class="t" style="left:436.75px;top:887.00px;font-size:16.23px;color:#a3a3a3;">5</div>
<svg style="left:66px;top:921.0px" width="45.5" height="45.5" viewBox="0 0 46 46"><defs><clipPath id="th5"><rect width="46" height="46" rx="6"/></clipPath></defs><g clip-path="url(#th5)"><rect width="46" height="46" fill="#030303"/><path d="M8 26 C11 20 13 20 14 24 C16 20 18 20 19 24 C21 21 24 21 25 24 C27 21 30 21 31 24 C33 21 36 20 38 22" fill="none" stroke="#e8e8e8" stroke-width="1.2"/></g></svg>
<div class="t" style="left:119.47px;top:924.00px;font-size:16.67px;color:#fff;letter-spacing:0.20px;">Mancini Editi...</div>
<div class="t" style="left:119.75px;top:948.00px;font-size:15.65px;color:#a3a3a3;letter-spacing:0.06px;">Listed: 0/1</div>
<svg style="left:405.2px;top:925.8px;overflow:visible" width="11.4" height="12.8" viewBox="0 0 20 24"><path d="M10 1 L16.3 9.2 C17.9 11.3 19 13.4 19 15.6 C19 20.1 15 23.2 10 23.2 C5 23.2 1 20.1 1 15.6 C1 13.4 2.1 11.3 3.7 9.2 Z" fill="none" stroke="#4da2ff" stroke-width="2.37" stroke-linejoin="round"/><path d="M3.6 9.3 C6.8 10.1 8.6 12.4 10.2 14.8 C12 17.6 14.6 19.4 18.6 19.1" fill="none" stroke="#4da2ff" stroke-width="2.37"/></svg>
<div class="t" style="left:421.85px;top:925.00px;font-size:17.39px;color:#fff;letter-spacing:-0.17px;">4.8</div>
<div class="t" style="left:361.78px;top:949.00px;font-size:16.52px;color:#a3a3a3;letter-spacing:0.36px;">Floor:</div>
<svg style="left:411.3px;top:950.5px;overflow:visible" width="9.5" height="10.6" viewBox="0 0 20 24"><path d="M10 1 L16.3 9.2 C17.9 11.3 19 13.4 19 15.6 C19 20.1 15 23.2 10 23.2 C5 23.2 1 20.1 1 15.6 C1 13.4 2.1 11.3 3.7 9.2 Z" fill="none" stroke="#4da2ff" stroke-width="2.84" stroke-linejoin="round"/><path d="M3.6 9.3 C6.8 10.1 8.6 12.4 10.2 14.8 C12 17.6 14.6 19.4 18.6 19.1" fill="none" stroke="#4da2ff" stroke-width="2.84"/></svg>
<div class="t" style="left:423.68px;top:948.00px;font-size:16.23px;color:#a3a3a3;letter-spacing:-0.29px;">4.8</div>
<svg style="left:66px;top:981.7px" width="45.5" height="45.5" viewBox="0 0 46 46"><defs><clipPath id="th6"><rect width="46" height="46" rx="6"/></clipPath></defs><g clip-path="url(#th6)"><rect width="46" height="46" fill="#030303"/><rect x="12" y="14" width="22" height="4.5" fill="#e8e8e8"/><rect x="12" y="20.5" width="22" height="5" fill="#e8e8e8"/><rect x="12" y="27.5" width="22" height="5" fill="#d8d8d8"/><circle cx="23" cy="26" r="5" fill="#2a1a14"/><path d="M14 46 C15 35 31 35 32 46Z" fill="#201818"/><rect x="20" y="37" width="6" height="4" fill="#c04080"/></g></svg>
<div class="t" style="left:120.63px;top:985.00px;font-size:16.67px;color:#fff;letter-spacing:-0.28px;">$UICIDE SOCIAL C...</div>
<div class="t" style="left:119.75px;top:1009.00px;font-size:15.65px;color:#a3a3a3;letter-spacing:0.06px;">Listed: 0/1</div>
<svg style="left:405.2px;top:986.5px;overflow:visible" width="11.4" height="12.8" viewBox="0 0 20 24"><path d="M10 1 L16.3 9.2 C17.9 11.3 19 13.4 19 15.6 C19 20.1 15 23.2 10 23.2 C5 23.2 1 20.1 1 15.6 C1 13.4 2.1 11.3 3.7 9.2 Z" fill="none" stroke="#4da2ff" stroke-width="2.37" stroke-linejoin="round"/><path d="M3.6 9.3 C6.8 10.1 8.6 12.4 10.2 14.8 C12 17.6 14.6 19.4 18.6 19.1" fill="none" stroke="#4da2ff" stroke-width="2.37"/></svg>
<div class="t" style="left:421.50px;top:985.00px;font-size:17.39px;color:#fff;">3.8</div>
<div class="t" style="left:361.78px;top:1009.00px;font-size:16.52px;color:#a3a3a3;letter-spacing:0.36px;">Floor:</div>
<svg style="left:411.3px;top:1011.3px;overflow:visible" width="9.5" height="10.6" viewBox="0 0 20 24"><path d="M10 1 L16.3 9.2 C17.9 11.3 19 13.4 19 15.6 C19 20.1 15 23.2 10 23.2 C5 23.2 1 20.1 1 15.6 C1 13.4 2.1 11.3 3.7 9.2 Z" fill="none" stroke="#4da2ff" stroke-width="2.84" stroke-linejoin="round"/><path d="M3.6 9.3 C6.8 10.1 8.6 12.4 10.2 14.8 C12 17.6 14.6 19.4 18.6 19.1" fill="none" stroke="#4da2ff" stroke-width="2.84"/></svg>
<div class="t" style="left:423.35px;top:1008.00px;font-size:16.23px;color:#a3a3a3;letter-spacing:-0.13px;">3.8</div>
<svg style="left:66px;top:1042.5px" width="45.5" height="45.5" viewBox="0 0 46 46"><defs><clipPath id="th7"><rect width="46" height="46" rx="6"/></clipPath></defs><g clip-path="url(#th7)"><rect width="46" height="46" fill="#707076"/><rect x="0" y="0" width="10" height="46" fill="#9a9aa0"/><rect x="10" y="6" width="12" height="30" fill="#d04890"/><rect x="22" y="4" width="10" height="20" fill="#505058"/><rect x="33" y="8" width="5" height="22" fill="#4a78c8"/><rect x="14" y="30" width="14" height="14" fill="#303036"/><rect x="30" y="34" width="10" height="6" fill="#c04888"/><rect x="38" y="4" width="8" height="10" fill="#b8b8c0"/><rect x="2" y="20" width="6" height="8" fill="#4a78c8"/></g></svg>
<div class="t" style="left:119.97px;top:1045.00px;font-size:16.67px;color:#fff;letter-spacing:0.39px;">Cyber-sca...</div>
<div class="t" style="left:119.75px;top:1070.00px;font-size:15.65px;color:#a3a3a3;letter-spacing:0.06px;">Listed: 0/1</div>
<svg style="left:405.9px;top:1047.2px;overflow:visible" width="11.1" height="12.8" viewBox="0 0 20 24"><path d="M10 1 L16.3 9.2 C17.9 11.3 19 13.4 19 15.6 C19 20.1 15 23.2 10 23.2 C5 23.2 1 20.1 1 15.6 C1 13.4 2.1 11.3 3.7 9.2 Z" fill="none" stroke="#4da2ff" stroke-width="2.43" stroke-linejoin="round"/><path d="M3.6 9.3 C6.8 10.1 8.6 12.4 10.2 14.8 C12 17.6 14.6 19.4 18.6 19.1" fill="none" stroke="#4da2ff" stroke-width="2.43"/></svg>
<div class="t" style="left:421.80px;top:1046.00px;font-size:17.39px;color:#fff;letter-spacing:-0.14px;">3.5</div>
<div class="t" style="left:361.78px;top:1070.00px;font-size:16.52px;color:#a3a3a3;letter-spacing:0.36px;">Floor:</div>
<svg style="left:411.3px;top:1072.0px;overflow:visible" width="9.5" height="10.6" viewBox="0 0 20 24"><path d="M10 1 L16.3 9.2 C17.9 11.3 19 13.4 19 15.6 C19 20.1 15 23.2 10 23.2 C5 23.2 1 20.1 1 15.6 C1 13.4 2.1 11.3 3.7 9.2 Z" fill="none" stroke="#4da2ff" stroke-width="2.84" stroke-linejoin="round"/><path d="M3.6 9.3 C6.8 10.1 8.6 12.4 10.2 14.8 C12 17.6 14.6 19.4 18.6 19.1" fill="none" stroke="#4da2ff" stroke-width="2.84"/></svg>
<div class="t" style="left:423.35px;top:1069.00px;font-size:16.23px;color:#a3a3a3;letter-spacing:-0.13px;">3.5</div>
<svg style="left:66px;top:1103.2px" width="45.5" height="45.5" viewBox="0 0 46 46"><defs><clipPath id="th8"><rect width="46" height="46" rx="6"/></clipPath></defs><g clip-path="url(#th8)"><rect width="46" height="46" fill="#36d4a6"/><circle cx="12" cy="11" r="5" fill="#2a2a2a"/><circle cx="33" cy="11" r="5" fill="#2a2a2a"/><ellipse cx="23" cy="22" rx="14" ry="13" fill="#3e9a5e"/><circle cx="16.5" cy="20" r="3.2" fill="#3050a0"/><circle cx="29.5" cy="20" r="3.2" fill="#3050a0"/><circle cx="23" cy="26" r="2.2" fill="#e0609a"/><path d="M12 46 C13 35 33 35 34 46Z" fill="#6a5a48"/><rect x="20" y="37" width="6" height="9" fill="#3a5aa0"/></g></svg>
<div class="t" style="left:119.97px;top:1106.00px;font-size:16.67px;color:#fff;letter-spacing:0.30px;">Cosmoc...</div>
<div class="t" style="left:119.75px;top:1131.00px;font-size:15.65px;color:#a3a3a3;letter-spacing:0.06px;">Listed: 0/1</div>
<svg style="left:395.4px;top:1108.0px;overflow:visible" width="10.9" height="12.8" viewBox="0 0 20 24"><path d="M10 1 L16.3 9.2 C17.9 11.3 19 13.4 19 15.6 C19 20.1 15 23.2 10 23.2 C5 23.2 1 20.1 1 15.6 C1 13.4 2.1 11.3 3.7 9.2 Z" fill="none" stroke="#4da2ff" stroke-width="2.48" stroke-linejoin="round"/><path d="M3.6 9.3 C6.8 10.1 8.6 12.4 10.2 14.8 C12 17.6 14.6 19.4 18.6 19.1" fill="none" stroke="#4da2ff" stroke-width="2.48"/></svg>
<div class="t" style="left:411.63px;top:1107.00px;font-size:17.39px;color:#fff;letter-spacing:0.08px;">2.68</div>
<div class="t" style="left:352.68px;top:1131.00px;font-size:16.52px;color:#a3a3a3;letter-spacing:0.36px;">Floor:</div>
<svg style="left:402.2px;top:1132.8px;overflow:visible" width="9.1" height="10.6" viewBox="0 0 20 24"><path d="M10 1 L16.3 9.2 C17.9 11.3 19 13.4 19 15.6 C19 20.1 15 23.2 10 23.2 C5 23.2 1 20.1 1 15.6 C1 13.4 2.1 11.3 3.7 9.2 Z" fill="none" stroke="#4da2ff" stroke-width="2.97" stroke-linejoin="round"/><path d="M3.6 9.3 C6.8 10.1 8.6 12.4 10.2 14.8 C12 17.6 14.6 19.4 18.6 19.1" fill="none" stroke="#4da2ff" stroke-width="2.97"/></svg>
<div class="t" style="left:414.19px;top:1130.00px;font-size:16.23px;color:#a3a3a3;letter-spacing:-0.04px;">2.68</div>
<svg style="left:460px;top:645px;" width="20" height="30" viewBox="0 0 20 30"><path d="M13.4 7.1 L5 15 L13.4 22.7" fill="none" stroke="#a3a3a3" stroke-width="1.8" stroke-linecap="round" stroke-linejoin="round"/></svg>
<div class="t" style="left:505.09px;top:172.00px;font-size:16.81px;color:#a8a8a8;letter-spacing:0.25px;">Items</div>
<div class="t" style="left:574.16px;top:172.00px;font-size:16.81px;color:#a8a8a8;letter-spacing:0.07px;">Coins</div>
<div class="t" style="left:645.00px;top:172.00px;font-size:16.81px;color:#a8a8a8;letter-spacing:0.34px;">Activity</div>
<div class="t" style="left:727.56px;top:172.00px;font-size:16.81px;color:#a8a8a8;letter-spacing:0.11px;">Bids</div>
<div class="t" style="left:787.36px;top:172.00px;font-size:16.81px;color:#a8a8a8;letter-spacing:0.27px;">Profit/Loss</div>
<div class="t" style="left:896.52px;top:172.00px;font-size:16.81px;color:#fff;letter-spacing:0.09px;">Value</div>
<svg style="left:0;top:0" width="1" height="1"><path d="M1907.48 176.37 L1903.96 180 L1907.48 183.63 M1914.52 176.37 L1918.04 180 L1914.52 183.63 M1912.54 173.95 L1909.46 186.05" fill="none" stroke="#c0c0c0" stroke-width="1.35" stroke-linecap="round" stroke-linejoin="round"/></svg>
<div class="t" style="left:498.03px;top:223.56px;font-size:31.29px;color:#d38d12;transform-origin:0 0;transform:scaleX(0.992);font-weight:bold;-webkit-text-stroke:0">$</div>
<div class="t" style="left:521.20px;top:223.00px;font-size:32.61px;color:#fff;letter-spacing:-2.27px;">317.00</div>
<svg style="left:619.5px;top:231.5px;" width="16.5" height="16.5" viewBox="0 0 16.5 16.5"><circle cx="8.25" cy="8.25" r="7.4" fill="none" stroke="#a3a3a3" stroke-width="1.3"/><line x1="8.25" y1="7.2" x2="8.25" y2="12" stroke="#a3a3a3" stroke-width="1.5"/><circle cx="8.25" cy="4.8" r="0.9" fill="#a3a3a3"/></svg>
<svg style="left:499.5px;top:265.0px;overflow:visible" width="14.5" height="17.0" viewBox="0 0 20 24"><path d="M10 1 L16.3 9.2 C17.9 11.3 19 13.4 19 15.6 C19 20.1 15 23.2 10 23.2 C5 23.2 1 20.1 1 15.6 C1 13.4 2.1 11.3 3.7 9.2 Z" fill="none" stroke="#4da2ff" stroke-width="1.86" stroke-linejoin="round"/><path d="M3.6 9.3 C6.8 10.1 8.6 12.4 10.2 14.8 C12 17.6 14.6 19.4 18.6 19.1" fill="none" stroke="#4da2ff" stroke-width="1.86"/></svg>
<div class="t" style="left:519.92px;top:261.00px;font-size:23.91px;color:#a8a8a8;letter-spacing:0.47px;">82.79</div>
<div class="t" style="left:497.92px;top:294.00px;font-size:18.55px;color:#a8a8a8;letter-spacing:-0.26px;">Jul 21st, 2025 7:09AM</div>
<svg style="left:0;top:0" width="1" height="1"><circle cx="1822.6" cy="243.8" r="5.8" fill="none" stroke="#a8a8a8" stroke-width="1.3"/><line x1="1820.3999999999999" y1="235.60000000000002" x2="1824.8" y2="235.60000000000002" stroke="#a8a8a8" stroke-width="1.3"/><line x1="1822.6" y1="240.3" x2="1822.6" y2="243.8" stroke="#a8a8a8" stroke-width="1.3"/><line x1="1827.6" y1="238.20000000000002" x2="1828.8999999999999" y2="236.8" stroke="#a8a8a8" stroke-width="1.04"/></svg>
<div class="t" style="left:1837.44px;top:234.00px;font-size:17.10px;color:#fff;letter-spacing:-0.35px;">7 Days</div>
<svg style="left:0;top:0" width="1" height="1"><path d="M1899 241.5 L1903.6 246.7 L1908.2 241.5" fill="none" stroke="#a3a3a3" stroke-width="1.5" stroke-linecap="round" stroke-linejoin="round"/></svg>
<div class="t" style="left:1815.58px;top:284.00px;font-size:16.52px;color:#a8a8a8;letter-spacing:0.07px;">Reset Zoom</div>
<svg style="left:0;top:0" width="2000" height="1178" viewBox="0 0 2000 1178"><defs><linearGradient id="gf" x1="0" y1="430" x2="0" y2="1109" gradientUnits="userSpaceOnUse"><stop offset="0" stop-color="#ec9a2a" stop-opacity="0.25"/><stop offset="0.35" stop-color="#ec9a2a" stop-opacity="0.18"/><stop offset="1" stop-color="#e8962a" stop-opacity="0"/></linearGradient></defs><line x1="538" y1="350.0" x2="1898" y2="350.0" stroke="#1f1f1f" stroke-width="1"/><line x1="538" y1="614.1" x2="1898" y2="614.1" stroke="#1f1f1f" stroke-width="1"/><line x1="538" y1="861.8" x2="1898" y2="861.8" stroke="#1f1f1f" stroke-width="1"/><path d="M537.8 861.8 L537.8 729.7 L546.0 729.7 L546.0 663.7 L546.8 663.7 L546.8 465.6 L548.2 465.6 L548.2 597.6 L551.0 597.6 L551.0 680.2 L552.0 680.2 L552.0 597.6 L553.5 597.6 L553.5 581.1 L557.2 581.1 L557.2 564.6 L575.0 564.6 L575.0 630.6 L576.3 630.6 L576.3 647.2 L580.1 647.2 L580.1 696.7 L585.8 696.7 L585.8 548.1 L596.9 548.1 L596.9 564.6 L600.7 564.6 L600.7 581.1 L610.7 581.1 L610.7 564.6 L613.8 564.6 L613.8 531.6 L615.3 531.6 L615.3 548.1 L629.0 548.1 L629.0 531.6 L631.0 531.6 L631.0 564.6 L632.0 564.6 L632.0 531.6 L634.9 531.6 L634.9 432.5 L642.0 432.5 L642.0 531.6 L654.3 531.6 L654.3 548.1 L658.1 548.1 L658.1 597.6 L661.9 597.6 L661.9 581.1 L665.0 581.1 L665.0 647.2 L668.7 647.2 L668.7 630.6 L677.4 630.6 L677.4 944.3 L678.6 944.3 L678.6 630.6 L682.2 630.6 L682.2 663.7 L683.2 663.7 L683.2 696.7 L684.2 696.7 L684.2 680.2 L694.7 680.2 L694.7 795.7 L704.2 795.7 L704.2 828.8 L707.7 828.8 L707.7 746.2 L720.5 746.2 L720.5 762.7 L722.0 762.7 L722.0 861.8 L723.0 861.8 L723.0 828.8 L729.0 828.8 L729.0 762.7 L730.6 762.7 L730.6 746.2 L731.3 746.2 L731.3 911.3 L732.0 911.3 L732.0 762.7 L738.0 762.7 L738.0 746.2 L739.3 746.2 L739.3 828.8 L741.3 828.8 L741.3 845.3 L742.4 845.3 L742.4 894.8 L743.0 894.8 L743.0 845.3 L743.6 845.3 L743.6 894.8 L744.3 894.8 L744.3 878.3 L745.4 878.3 L745.4 911.3 L756.6 911.3 L756.6 944.3 L759.6 944.3 L759.6 878.3 L760.6 878.3 L760.6 746.2 L780.5 746.2 L780.5 762.7 L781.7 762.7 L781.7 746.2 L803.0 746.2 L803.0 729.7 L804.2 729.7 L804.2 795.7 L805.0 795.7 L805.0 746.2 L823.2 746.2 L823.2 762.7 L827.3 762.7 L827.3 779.2 L830.4 779.2 L830.4 746.2 L844.6 746.2 L844.6 779.2 L846.6 779.2 L846.6 795.7 L847.7 795.7 L847.7 812.2 L848.7 812.2 L848.7 845.3 L852.3 845.3 L852.3 861.8 L854.3 861.8 L854.3 878.3 L866.5 878.3 L866.5 894.8 L882.4 894.8 L882.4 927.8 L897.4 927.8 L897.4 993.8 L898.0 993.8 L898.0 1026.9 L901.1 1026.9 L901.1 977.3 L904.8 977.3 L904.8 993.8 L905.6 993.8 L905.6 845.3 L910.2 845.3 L910.2 515.1 L918.7 515.1 L918.7 548.1 L951.3 548.1 L951.3 581.1 L962.8 581.1 L962.8 647.2 L975.0 647.2 L975.0 663.7 L1033.8 663.7 L1033.8 680.2 L1078.1 680.2 L1078.1 663.7 L1107.5 663.7 L1107.5 680.2 L1115.8 680.2 L1115.8 663.7 L1140.4 663.7 L1140.4 597.6 L1147.9 597.6 L1147.9 614.1 L1163.2 614.1 L1163.2 746.2 L1173.9 746.2 L1173.9 762.7 L1174.4 762.7 L1174.4 779.2 L1208.4 779.2 L1208.4 795.7 L1220.8 795.7 L1220.8 779.2 L1222.5 779.2 L1222.5 795.7 L1227.0 795.7 L1227.0 779.2 L1235.5 779.2 L1235.5 795.7 L1238.1 795.7 L1238.1 746.2 L1243.5 746.2 L1243.5 713.2 L1248.3 713.2 L1248.3 729.7 L1251.3 729.7 L1251.3 696.7 L1261.0 696.7 L1261.0 729.7 L1270.0 729.7 L1270.0 746.2 L1281.9 746.2 L1281.9 779.2 L1283.1 779.2 L1283.1 795.7 L1290.8 795.7 L1290.8 845.3 L1314.2 845.3 L1314.2 828.8 L1317.7 828.8 L1317.7 795.7 L1322.4 795.7 L1322.4 779.2 L1345.6 779.2 L1345.6 663.7 L1369.3 663.7 L1369.3 680.2 L1386.8 680.2 L1386.8 663.7 L1388.0 663.7 L1388.0 696.7 L1423.8 696.7 L1423.8 647.2 L1442.2 647.2 L1442.2 630.6 L1443.4 630.6 L1443.4 647.2 L1450.6 647.2 L1450.6 729.7 L1456.4 729.7 L1456.4 630.6 L1458.5 630.6 L1458.5 614.1 L1459.7 614.1 L1459.7 630.6 L1464.9 630.6 L1464.9 713.2 L1465.9 713.2 L1465.9 680.2 L1473.3 680.2 L1473.3 663.7 L1474.7 663.7 L1474.7 564.6 L1477.2 564.6 L1477.2 614.1 L1490.8 614.1 L1490.8 696.7 L1491.7 696.7 L1491.7 713.2 L1494.5 713.2 L1494.5 630.6 L1522.9 630.6 L1522.9 647.2 L1528.6 647.2 L1528.6 680.2 L1543.0 680.2 L1543.0 746.2 L1544.2 746.2 L1544.2 680.2 L1551.6 680.2 L1551.6 713.2 L1557.5 713.2 L1557.5 729.7 L1576.4 729.7 L1576.4 713.2 L1577.6 713.2 L1577.6 795.7 L1599.2 795.7 L1599.2 845.3 L1630.8 845.3 L1630.8 779.2 L1632.0 779.2 L1632.0 812.2 L1645.8 812.2 L1645.8 861.8 L1675.2 861.8 L1675.2 845.3 L1738.8 845.3 L1738.8 795.7 L1742.2 795.7 L1742.2 779.2 L1779.0 779.2 L1779.0 795.7 L1796.2 795.7 L1796.2 779.2 L1800.4 779.2 L1800.4 531.6 L1801.4 531.6 L1801.4 581.1 L1823.0 581.1 L1823 1109.4 L537.8 1109.4 Z" fill="url(#gf)"/><path d="M537.8 861.8 L537.8 729.7 L546.0 729.7 L546.0 663.7 L546.8 663.7 L546.8 465.6 L548.2 465.6 L548.2 597.6 L551.0 597.6 L551.0 680.2 L552.0 680.2 L552.0 597.6 L553.5 597.6 L553.5 581.1 L557.2 581.1 L557.2 564.6 L575.0 564.6 L575.0 630.6 L576.3 630.6 L576.3 647.2 L580.1 647.2 L580.1 696.7 L585.8 696.7 L585.8 548.1 L596.9 548.1 L596.9 564.6 L600.7 564.6 L600.7 581.1 L610.7 581.1 L610.7 564.6 L613.8 564.6 L613.8 531.6 L615.3 531.6 L615.3 548.1 L629.0 548.1 L629.0 531.6 L631.0 531.6 L631.0 564.6 L632.0 564.6 L632.0 531.6 L634.9 531.6 L634.9 432.5 L642.0 432.5 L642.0 531.6 L654.3 531.6 L654.3 548.1 L658.1 548.1 L658.1 597.6 L661.9 597.6 L661.9 581.1 L665.0 581.1 L665.0 647.2 L668.7 647.2 L668.7 630.6 L677.4 630.6 L677.4 944.3 L678.6 944.3 L678.6 630.6 L682.2 630.6 L682.2 663.7 L683.2 663.7 L683.2 696.7 L684.2 696.7 L684.2 680.2 L694.7 680.2 L694.7 795.7 L704.2 795.7 L704.2 828.8 L707.7 828.8 L707.7 746.2 L720.5 746.2 L720.5 762.7 L722.0 762.7 L722.0 861.8 L723.0 861.8 L723.0 828.8 L729.0 828.8 L729.0 762.7 L730.6 762.7 L730.6 746.2 L731.3 746.2 L731.3 911.3 L732.0 911.3 L732.0 762.7 L738.0 762.7 L738.0 746.2 L739.3 746.2 L739.3 828.8 L741.3 828.8 L741.3 845.3 L742.4 845.3 L742.4 894.8 L743.0 894.8 L743.0 845.3 L743.6 845.3 L743.6 894.8 L744.3 894.8 L744.3 878.3 L745.4 878.3 L745.4 911.3 L756.6 911.3 L756.6 944.3 L759.6 944.3 L759.6 878.3 L760.6 878.3 L760.6 746.2 L780.5 746.2 L780.5 762.7 L781.7 762.7 L781.7 746.2 L803.0 746.2 L803.0 729.7 L804.2 729.7 L804.2 795.7 L805.0 795.7 L805.0 746.2 L823.2 746.2 L823.2 762.7 L827.3 762.7 L827.3 779.2 L830.4 779.2 L830.4 746.2 L844.6 746.2 L844.6 779.2 L846.6 779.2 L846.6 795.7 L847.7 795.7 L847.7 812.2 L848.7 812.2 L848.7 845.3 L852.3 845.3 L852.3 861.8 L854.3 861.8 L854.3 878.3 L866.5 878.3 L866.5 894.8 L882.4 894.8 L882.4 927.8 L897.4 927.8 L897.4 993.8 L898.0 993.8 L898.0 1026.9 L901.1 1026.9 L901.1 977.3 L904.8 977.3 L904.8 993.8 L905.6 993.8 L905.6 845.3 L910.2 845.3 L910.2 515.1 L918.7 515.1 L918.7 548.1 L951.3 548.1 L951.3 581.1 L962.8 581.1 L962.8 647.2 L975.0 647.2 L975.0 663.7 L1033.8 663.7 L1033.8 680.2 L1078.1 680.2 L1078.1 663.7 L1107.5 663.7 L1107.5 680.2 L1115.8 680.2 L1115.8 663.7 L1140.4 663.7 L1140.4 597.6 L1147.9 597.6 L1147.9 614.1 L1163.2 614.1 L1163.2 746.2 L1173.9 746.2 L1173.9 762.7 L1174.4 762.7 L1174.4 779.2 L1208.4 779.2 L1208.4 795.7 L1220.8 795.7 L1220.8 779.2 L1222.5 779.2 L1222.5 795.7 L1227.0 795.7 L1227.0 779.2 L1235.5 779.2 L1235.5 795.7 L1238.1 795.7 L1238.1 746.2 L1243.5 746.2 L1243.5 713.2 L1248.3 713.2 L1248.3 729.7 L1251.3 729.7 L1251.3 696.7 L1261.0 696.7 L1261.0 729.7 L1270.0 729.7 L1270.0 746.2 L1281.9 746.2 L1281.9 779.2 L1283.1 779.2 L1283.1 795.7 L1290.8 795.7 L1290.8 845.3 L1314.2 845.3 L1314.2 828.8 L1317.7 828.8 L1317.7 795.7 L1322.4 795.7 L1322.4 779.2 L1345.6 779.2 L1345.6 663.7 L1369.3 663.7 L1369.3 680.2 L1386.8 680.2 L1386.8 663.7 L1388.0 663.7 L1388.0 696.7 L1423.8 696.7 L1423.8 647.2 L1442.2 647.2 L1442.2 630.6 L1443.4 630.6 L1443.4 647.2 L1450.6 647.2 L1450.6 729.7 L1456.4 729.7 L1456.4 630.6 L1458.5 630.6 L1458.5 614.1 L1459.7 614.1 L1459.7 630.6 L1464.9 630.6 L1464.9 713.2 L1465.9 713.2 L1465.9 680.2 L1473.3 680.2 L1473.3 663.7 L1474.7 663.7 L1474.7 564.6 L1477.2 564.6 L1477.2 614.1 L1490.8 614.1 L1490.8 696.7 L1491.7 696.7 L1491.7 713.2 L1494.5 713.2 L1494.5 630.6 L1522.9 630.6 L1522.9 647.2 L1528.6 647.2 L1528.6 680.2 L1543.0 680.2 L1543.0 746.2 L1544.2 746.2 L1544.2 680.2 L1551.6 680.2 L1551.6 713.2 L1557.5 713.2 L1557.5 729.7 L1576.4 729.7 L1576.4 713.2 L1577.6 713.2 L1577.6 795.7 L1599.2 795.7 L1599.2 845.3 L1630.8 845.3 L1630.8 779.2 L1632.0 779.2 L1632.0 812.2 L1645.8 812.2 L1645.8 861.8 L1675.2 861.8 L1675.2 845.3 L1738.8 845.3 L1738.8 795.7 L1742.2 795.7 L1742.2 779.2 L1779.0 779.2 L1779.0 795.7 L1796.2 795.7 L1796.2 779.2 L1800.4 779.2 L1800.4 531.6 L1801.4 531.6 L1801.4 581.1 L1823.0 581.1" fill="none" stroke="#dc900c" stroke-width="1.9" stroke-linejoin="miter"/><line x1="537.5" y1="350" x2="537.5" y2="1109.5" stroke="#333" stroke-width="1"/><line x1="537" y1="1109.5" x2="1898.5" y2="1109.5" stroke="#3a3a3a" stroke-width="1"/><line x1="531" y1="350.5" x2="537" y2="350.5" stroke="#3a3a3a" stroke-width="1"/><line x1="531" y1="614.5" x2="537" y2="614.5" stroke="#3a3a3a" stroke-width="1"/><line x1="531" y1="862.5" x2="537" y2="862.5" stroke="#3a3a3a" stroke-width="1"/><line x1="531" y1="1109.5" x2="537" y2="1109.5" stroke="#3a3a3a" stroke-width="1"/><line x1="537.5" y1="1109" x2="537.5" y2="1116" stroke="#3a3a3a" stroke-width="1"/><line x1="962.5" y1="1109" x2="962.5" y2="1116" stroke="#3a3a3a" stroke-width="1"/><line x1="1387.5" y1="1109" x2="1387.5" y2="1116" stroke="#3a3a3a" stroke-width="1"/><line x1="1898.5" y1="1109" x2="1898.5" y2="1116" stroke="#3a3a3a" stroke-width="1"/></svg>
<div class="t" style="left:500.14px;top:343.00px;font-size:16.38px;color:#8f8f8f;letter-spacing:0.42px;">348</div>
<div class="t" style="left:501.04px;top:606.00px;font-size:16.38px;color:#8f8f8f;letter-spacing:0.05px;">332</div>
<div class="t" style="left:504.43px;top:854.00px;font-size:16.81px;color:#8f8f8f;letter-spacing:-1.99px;">317</div>
<div class="t" style="left:500.76px;top:1100.00px;font-size:16.09px;color:#8f8f8f;letter-spacing:0.43px;">302</div>
<div class="t" style="left:517.66px;top:1115.00px;font-size:16.09px;color:#8f8f8f;letter-spacing:-0.64px;">Jul 21</div>
<div class="t" style="left:941.26px;top:1115.00px;font-size:16.09px;color:#8f8f8f;letter-spacing:-0.05px;">Jul 23</div>
<div class="t" style="left:1366.76px;top:1115.00px;font-size:16.09px;color:#8f8f8f;letter-spacing:-0.05px;">Jul 26</div>
<div class="t" style="left:1877.51px;top:1115.00px;font-size:16.09px;color:#8f8f8f;letter-spacing:-0.08px;">Jul 29</div>
</body></html>
